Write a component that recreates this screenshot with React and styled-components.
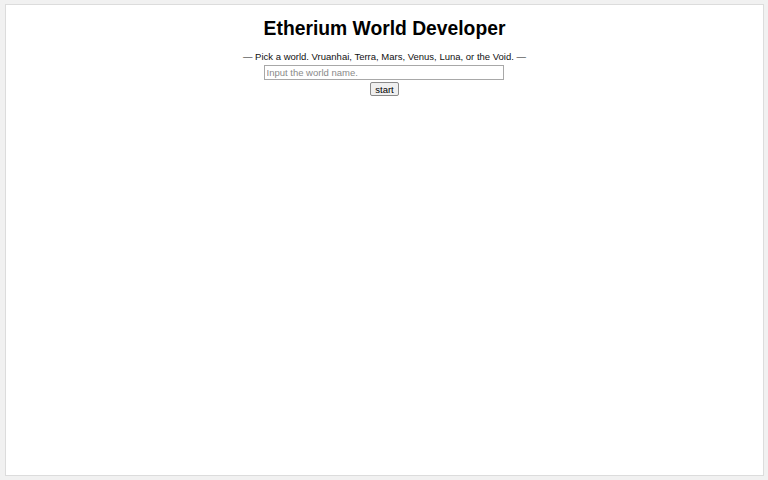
import React, { useState } from "react";
import styled, { createGlobalStyle } from "styled-components";

const GlobalStyle = createGlobalStyle`
  html, body {
    margin: 0;
    padding: 0;
    background: #f1f1f1;
    font-family: "Liberation Sans", Arial, sans-serif;
  }
`;

const Page = styled.div`
  box-sizing: border-box;
  height: 480px;
  padding: 4px 4px 4px 5px;
  display: flex;
`;

const Panel = styled.main`
  flex: 1;
  background: #fff;
  border: 1px solid #dcdcdc;
  display: flex;
  flex-direction: column;
  align-items: center;
`;

const Title = styled.h1`
  margin: 13px 0 0;
  font-size: 19.3px;
  font-weight: bold;
  color: #000;
`;

const Prompt = styled.p`
  margin: 11px 0 0;
  font-size: 9.5px;
  color: #111;
`;

const WorldInput = styled.input`
  box-sizing: border-box;
  width: 240px;
  height: 15px;
  margin: 3px 0 0 -2px;
  padding: 0 2px;
  border: 1px solid #a8a8a8;
  font-family: inherit;
  font-size: 9.5px;
  &::placeholder {
    color: #8a8a8a;
  }
`;

const StartButton = styled.button`
  margin-top: 2px;
  padding: 0 4px;
  height: 14px;
  font-family: inherit;
  font-size: 9.5px;
  background: #efefef;
  border: 1px solid #8a8a8a;
  border-radius: 2px;
  color: #000;
`;

export default function App() {
  const [world, setWorld] = useState("");
  return (
    <>
      <GlobalStyle />
      <Page>
        <Panel>
          <Title>Etherium World Developer</Title>
          <Prompt>— Pick a world. Vruanhai, Terra, Mars, Venus, Luna, or the Void. —</Prompt>
          <WorldInput
            value={world}
            onChange={(e) => setWorld(e.target.value)}
            placeholder="Input the world name."
          />
          <StartButton>start</StartButton>
        </Panel>
      </Page>
    </>
  );
}
